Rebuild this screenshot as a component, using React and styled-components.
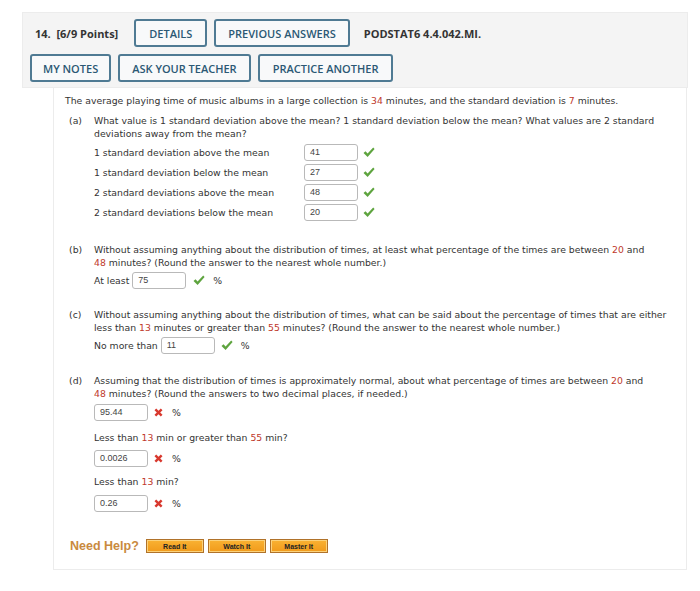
import React from "react";
import styled, { createGlobalStyle } from "styled-components";

const GlobalStyle = createGlobalStyle`
  body {
    margin: 0;
    background: #ffffff;
  }
`;

const Page = styled.div`
  width: 700px;
  height: 591px;
  padding: 12px 0 0 22px;
  box-sizing: border-box;
`;

const Header = styled.div`
  width: 666px;
  height: 76px;
  box-sizing: border-box;
  background: #f4f4f4;
  border: 1px solid #ececec;
  padding: 6px 7px 0;
  display: flex;
  flex-direction: column;
  gap: 7px;
  font-family: "Open Sans", "Liberation Sans", sans-serif;
`;

const Row = styled.div`
  display: flex;
  align-items: center;
  gap: ${(p) => p.$gap || 7}px;
`;

const Title = styled.div`
  font-size: 11px;
  font-weight: 700;
  color: #333;
  padding: 0 ${(p) => p.$right || 0}px 0 ${(p) => p.$left || 0}px;
  white-space: nowrap;
`;

const HeadButton = styled.div`
  height: 28px;
  box-sizing: border-box;
  padding: 0 ${(p) => p.$pad || 12}px;
  border: 2px solid #4f7a93;
  border-radius: 3px;
  background: #f8f9fa;
  color: #2b5874;
  font-size: 11px;
  font-weight: 600;
  display: flex;
  align-items: center;
  white-space: nowrap;
`;

const Content = styled.div`
  margin-left: 31px;
  width: 634px;
  height: 482px;
  box-sizing: border-box;
  border: 1px solid #ececec;
  border-top: none;
  padding: 6px 0 0 11px;
  font-family: "DejaVu Sans", Verdana, sans-serif;
  font-size: 9.3px;
  color: #333;
`;

const Intro = styled.p`
  margin: 0 0 7px;
  line-height: 13px;
`;

const Part = styled.div`
  display: flex;
  margin-bottom: ${(p) => p.$mb || 0}px;
`;

const Label = styled.div`
  width: 25px;
  margin-left: 4px;
  flex-shrink: 0;
  line-height: 13px;
`;

const Body = styled.div`
  flex: 1;
  padding-right: 8px;
`;

const Question = styled.div`
  line-height: 13px;
  white-space: nowrap;
  margin-bottom: ${(p) => p.$mb || 0}px;
`;

const Red = styled.span`
  color: #c0392b;
`;

const AnswerRow = styled.div`
  display: flex;
  align-items: center;
  height: 20px;
`;

const RowLabel = styled.div`
  width: ${(p) => p.$w || "auto"};
  margin-right: ${(p) => p.$mr || 0}px;
  white-space: nowrap;
`;

const Input = styled.div`
  width: 54px;
  height: 17px;
  box-sizing: border-box;
  border: 1px solid #b9b9b9;
  border-radius: 3px;
  background: #fff;
  padding-left: 5px;
  display: flex;
  align-items: center;
  font-family: "Liberation Sans", Arial, sans-serif;
  font-size: 9px;
  color: #444;
`;

const Mark = styled.div`
  width: 12px;
  height: 14px;
  margin-left: ${(p) => p.$ml || 5}px;
  display: flex;
  align-items: center;
  justify-content: center;
`;

const Percent = styled.span`
  margin-left: ${(p) => p.$ml || 8}px;
`;

const SubQ = styled.div`
  line-height: 13px;
  margin: ${(p) => p.$mt || 8}px 0 ${(p) => p.$mb || 4}px;
`;

const Help = styled.div`
  display: flex;
  align-items: center;
  gap: 4px;
  margin: 26px 0 0 5px;
  font-family: "Liberation Sans", Arial, sans-serif;
`;

const HelpText = styled.span`
  color: #c98a3e;
  font-size: 12.5px;
  font-weight: 700;
  margin-right: 3px;
`;

const HelpButton = styled.div`
  width: 58px;
  height: 14px;
  box-sizing: border-box;
  border: 1px solid #b0722a;
  background: linear-gradient(#f9b233, #f19a1a);
  box-shadow: inset 0 0 0 1px #fcd27a;
  color: #222;
  font-size: 7px;
  font-weight: 700;
  display: flex;
  align-items: center;
  justify-content: center;
`;

const Check = () => (
  <svg width="12" height="11" viewBox="0 0 12 11">
    <path
      d="M0.5 6 L2.5 4.2 L4.6 6.6 L10.2 0.6 L11.6 2 L4.6 10 Z"
      fill="#5ea43f"
    />
  </svg>
);

const Cross = () => (
  <svg width="11" height="11" viewBox="0 0 11 11">
    <path
      d="M1.5 3.2 L3.2 1.5 L5.5 3.8 L7.8 1.5 L9.5 3.2 L7.2 5.5 L9.5 7.8 L7.8 9.5 L5.5 7.2 L3.2 9.5 L1.5 7.8 L3.8 5.5 Z"
      fill="#d8382e"
    />
  </svg>
);

const partA = [
  ["1 standard deviation above the mean", "41"],
  ["1 standard deviation below the mean", "27"],
  ["2 standard deviations above the mean", "48"],
  ["2 standard deviations below the mean", "20"],
];

export default function App() {
  return (
    <Page>
      <GlobalStyle />
      <Header>
        <Row>
          <Title $left={5} $right={9}>
            14.&nbsp; [6/9 Points]
          </Title>
          <HeadButton $pad={13}>DETAILS</HeadButton>
          <HeadButton $pad={12}>PREVIOUS ANSWERS</HeadButton>
          <Title $left={7}>PODSTAT6 4.4.042.MI.</Title>
        </Row>
        <Row>
          <HeadButton $pad={11}>MY NOTES</HeadButton>
          <HeadButton>ASK YOUR TEACHER</HeadButton>
          <HeadButton $pad={13}>PRACTICE ANOTHER</HeadButton>
        </Row>
      </Header>
      <Content>
        <Intro>
          The average playing time of music albums in a large collection is <Red>34</Red> minutes, and
          the standard deviation is <Red>7</Red> minutes.
        </Intro>

        <Part $mb={21}>
          <Label>(a)</Label>
          <Body>
            <Question $mb={2}>
              What value is 1 standard deviation above the mean? 1 standard deviation below the mean?
              What values are 2 standard
              <br />
              deviations away from the mean?
            </Question>
            {partA.map(([text, value]) => (
              <AnswerRow key={text}>
                <RowLabel $w="210px">{text}</RowLabel>
                <Input>{value}</Input>
                <Mark>
                  <Check />
                </Mark>
              </AnswerRow>
            ))}
          </Body>
        </Part>

        <Part $mb={18}>
          <Label>(b)</Label>
          <Body>
            <Question $mb={1}>
              Without assuming anything about the distribution of times, at least what percentage of
              the times are between <Red>20</Red> and
              <br />
              <Red>48</Red> minutes? (Round the answer to the nearest whole number.)
            </Question>
            <AnswerRow>
              <RowLabel $mr={3}>At least</RowLabel>
              <Input>75</Input>
              <Mark $ml={7}>
                <Check />
              </Mark>
              <Percent $ml={8}>%</Percent>
            </AnswerRow>
          </Body>
        </Part>

        <Part $mb={19}>
          <Label>(c)</Label>
          <Body>
            <Question $mb={1}>
              Without assuming anything about the distribution of times, what can be said about the
              percentage of times that are either
              <br />
              less than <Red>13</Red> minutes or greater than <Red>55</Red> minutes? (Round the
              answer to the nearest whole number.)
            </Question>
            <AnswerRow>
              <RowLabel $mr={3}>No more than</RowLabel>
              <Input>11</Input>
              <Mark $ml={6}>
                <Check />
              </Mark>
              <Percent $ml={8}>%</Percent>
            </AnswerRow>
          </Body>
        </Part>

        <Part>
          <Label>(d)</Label>
          <Body>
            <Question $mb={2}>
              Assuming that the distribution of times is approximately normal, about what percentage
              of times are between <Red>20</Red> and
              <br />
              <Red>48</Red> minutes? (Round the answers to two decimal places, if needed.)
            </Question>
            <AnswerRow>
              <Input>95.44</Input>
              <Mark $ml={4}>
                <Cross />
              </Mark>
              <Percent $ml={8}>%</Percent>
            </AnswerRow>
            <SubQ $mt={9}>
              Less than <Red>13</Red> min or greater than <Red>55</Red> min?
            </SubQ>
            <AnswerRow>
              <Input>0.0026</Input>
              <Mark $ml={4}>
                <Cross />
              </Mark>
              <Percent $ml={8}>%</Percent>
            </AnswerRow>
            <SubQ $mt={7} $mb={5}>
              Less than <Red>13</Red> min?
            </SubQ>
            <AnswerRow>
              <Input>0.26</Input>
              <Mark $ml={4}>
                <Cross />
              </Mark>
              <Percent $ml={8}>%</Percent>
            </AnswerRow>
          </Body>
        </Part>

        <Help>
          <HelpText>Need Help?</HelpText>
          <HelpButton>Read It</HelpButton>
          <HelpButton>Watch It</HelpButton>
          <HelpButton>Master It</HelpButton>
        </Help>
      </Content>
    </Page>
  );
}
